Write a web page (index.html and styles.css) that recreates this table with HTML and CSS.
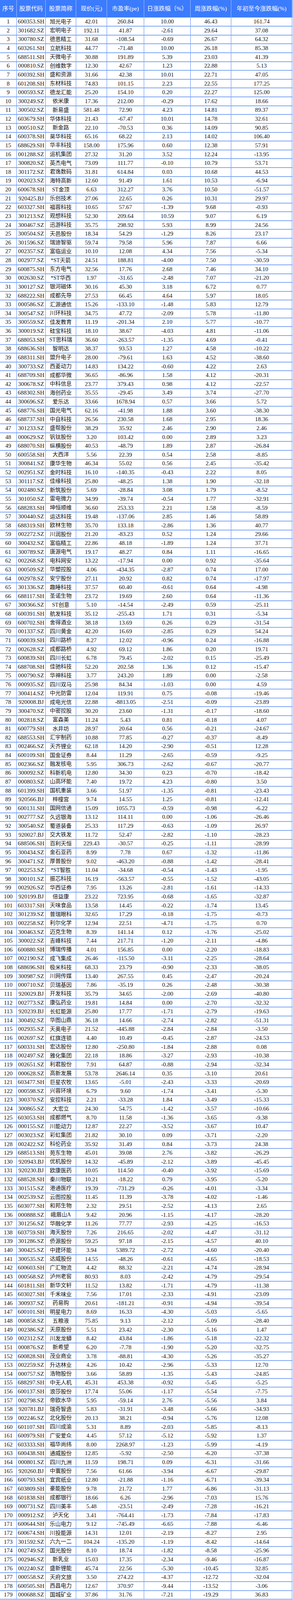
FILE: index.html
```html
<!DOCTYPE html>
<html lang="zh-CN">
<head>
<meta charset="utf-8">
<title>股票涨跌幅</title>
<link rel="stylesheet" href="styles.css">
</head>
<body>
<div class="tbl">
<div class="hd"><span>序号</span><span>股票代码</span><span>股票简称</span><span>现价(元)</span><span>市盈率(pe)</span><span>日涨跌幅（%）</span><span>周涨跌幅(%)</span><span>年初至今涨跌幅(%)</span></div>
<div class="r"><span>1</span><span>600353.SH</span><span>旭光电子</span><span>42.01</span><span>260.84</span><span>10.00</span><span>46.43</span><span>161.74</span></div>
<div class="r"><span>2</span><span>301682.SZ</span><span>宏明电子</span><span>192.11</span><span>41.87</span><span>-2.61</span><span>29.64</span><span>37.08</span></div>
<div class="r"><span>3</span><span>300780.SZ</span><span>德恩精工</span><span>31.68</span><span>-108.54</span><span>-0.69</span><span>26.67</span><span>64.32</span></div>
<div class="r"><span>4</span><span>603261.SH</span><span>立航科技</span><span>44.77</span><span>-71.48</span><span>10.00</span><span>26.18</span><span>85.38</span></div>
<div class="r"><span>5</span><span>688511.SH</span><span>天微电子</span><span>30.88</span><span>191.89</span><span>5.39</span><span>23.03</span><span>41.39</span></div>
<div class="r"><span>6</span><span>000810.SZ</span><span>创维数字</span><span>12.30</span><span>42.67</span><span>1.23</span><span>22.88</span><span>5.13</span></div>
<div class="r"><span>7</span><span>600392.SH</span><span>盛和资源</span><span>31.66</span><span>42.38</span><span>10.01</span><span>22.71</span><span>47.05</span></div>
<div class="r"><span>8</span><span>601208.SH</span><span>东材科技</span><span>74.83</span><span>101.15</span><span>2.23</span><span>22.55</span><span>177.25</span></div>
<div class="r"><span>9</span><span>000593.SZ</span><span>德龙汇能</span><span>25.20</span><span>154.10</span><span>0.20</span><span>22.27</span><span>125.00</span></div>
<div class="r"><span>10</span><span>300249.SZ</span><span>依米康</span><span>17.36</span><span>212.00</span><span>-0.29</span><span>17.62</span><span>18.66</span></div>
<div class="r"><span>11</span><span>300502.SZ</span><span>新易盛</span><span>581.48</span><span>72.90</span><span>4.23</span><span>14.81</span><span>89.37</span></div>
<div class="r"><span>12</span><span>603679.SH</span><span>华体科技</span><span>21.43</span><span>-67.47</span><span>10.01</span><span>14.78</span><span>32.61</span></div>
<div class="r"><span>13</span><span>000510.SZ</span><span>新金路</span><span>22.10</span><span>-70.53</span><span>0.36</span><span>14.09</span><span>90.85</span></div>
<div class="r"><span>14</span><span>600378.SH</span><span>昊华科技</span><span>65.16</span><span>68.22</span><span>2.13</span><span>14.02</span><span>106.40</span></div>
<div class="r"><span>15</span><span>688629.SH</span><span>华丰科技</span><span>158.00</span><span>175.96</span><span>0.60</span><span>12.38</span><span>57.91</span></div>
<div class="r"><span>16</span><span>001288.SZ</span><span>运机集团</span><span>27.32</span><span>31.20</span><span>3.52</span><span>12.24</span><span>-13.95</span></div>
<div class="r"><span>17</span><span>300820.SZ</span><span>英杰电气</span><span>73.09</span><span>111.77</span><span>-0.10</span><span>10.79</span><span>53.71</span></div>
<div class="r"><span>18</span><span>301172.SZ</span><span>君逸数码</span><span>31.81</span><span>614.84</span><span>0.03</span><span>10.68</span><span>44.53</span></div>
<div class="r"><span>19</span><span>002023.SZ</span><span>海特高新</span><span>12.60</span><span>91.49</span><span>1.61</span><span>10.53</span><span>-6.94</span></div>
<div class="r"><span>20</span><span>600678.SH</span><span>ST金顶</span><span>6.63</span><span>312.27</span><span>3.76</span><span>10.50</span><span>-51.57</span></div>
<div class="r"><span>21</span><span>920425.BJ</span><span>乐创技术</span><span>27.06</span><span>22.65</span><span>0.26</span><span>10.31</span><span>29.97</span></div>
<div class="r"><span>22</span><span>603327.SH</span><span>福蓉科技</span><span>10.65</span><span>57.67</span><span>-1.39</span><span>9.68</span><span>-0.93</span></div>
<div class="r"><span>23</span><span>301213.SZ</span><span>观想科技</span><span>52.30</span><span>209.64</span><span>10.59</span><span>9.07</span><span>6.19</span></div>
<div class="r"><span>24</span><span>300467.SZ</span><span>迅游科技</span><span>35.75</span><span>298.92</span><span>5.93</span><span>8.99</span><span>24.56</span></div>
<div class="r"><span>25</span><span>300504.SZ</span><span>天邑股份</span><span>18.34</span><span>54.29</span><span>-1.29</span><span>8.26</span><span>23.17</span></div>
<div class="r"><span>26</span><span>301596.SZ</span><span>瑞迪智驱</span><span>59.74</span><span>79.58</span><span>5.96</span><span>7.87</span><span>6.66</span></div>
<div class="r"><span>27</span><span>002357.SZ</span><span>富临运业</span><span>10.10</span><span>12.08</span><span>4.34</span><span>7.56</span><span>-5.34</span></div>
<div class="r"><span>28</span><span>002977.SZ</span><span>*ST天箭</span><span>24.51</span><span>188.81</span><span>-4.00</span><span>7.50</span><span>-30.59</span></div>
<div class="r"><span>29</span><span>600875.SH</span><span>东方电气</span><span>32.56</span><span>17.76</span><span>2.68</span><span>7.46</span><span>34.10</span></div>
<div class="r"><span>30</span><span>002630.SZ</span><span>*ST华西</span><span>1.97</span><span>-31.65</span><span>-2.48</span><span>7.07</span><span>-21.20</span></div>
<div class="r"><span>31</span><span>300127.SZ</span><span>银河磁体</span><span>30.16</span><span>45.30</span><span>3.18</span><span>6.72</span><span>0.77</span></div>
<div class="r"><span>32</span><span>688222.SH</span><span>成都先导</span><span>27.53</span><span>66.45</span><span>4.64</span><span>5.97</span><span>18.05</span></div>
<div class="r"><span>33</span><span>000586.SZ</span><span>汇源通信</span><span>15.26</span><span>-133.10</span><span>-1.48</span><span>5.83</span><span>12.79</span></div>
<div class="r"><span>34</span><span>300547.SZ</span><span>川环科技</span><span>34.75</span><span>47.72</span><span>-2.09</span><span>5.78</span><span>-11.80</span></div>
<div class="r"><span>35</span><span>300559.SZ</span><span>佳发教育</span><span>11.19</span><span>-201.34</span><span>2.10</span><span>5.77</span><span>-10.77</span></div>
<div class="r"><span>36</span><span>300019.SZ</span><span>硅宝科技</span><span>18.10</span><span>38.67</span><span>-4.03</span><span>4.81</span><span>-11.06</span></div>
<div class="r"><span>37</span><span>688053.SH</span><span>ST思科瑞</span><span>36.60</span><span>-263.57</span><span>-1.35</span><span>4.69</span><span>-0.41</span></div>
<div class="r"><span>38</span><span>688636.SH</span><span>智明达</span><span>38.37</span><span>93.53</span><span>1.27</span><span>4.58</span><span>-10.22</span></div>
<div class="r"><span>39</span><span>688311.SH</span><span>盟升电子</span><span>28.00</span><span>-79.61</span><span>1.63</span><span>4.52</span><span>-38.60</span></div>
<div class="r"><span>40</span><span>300733.SZ</span><span>西菱动力</span><span>14.83</span><span>134.22</span><span>-0.60</span><span>4.22</span><span>2.63</span></div>
<div class="r"><span>41</span><span>688709.SH</span><span>成都华微</span><span>36.65</span><span>-86.96</span><span>1.58</span><span>4.12</span><span>-20.31</span></div>
<div class="r"><span>42</span><span>300678.SZ</span><span>中科信息</span><span>23.77</span><span>379.43</span><span>0.98</span><span>4.12</span><span>-22.57</span></div>
<div class="r"><span>43</span><span>688302.SH</span><span>海创药业</span><span>35.55</span><span>-29.45</span><span>3.49</span><span>3.74</span><span>-27.70</span></div>
<div class="r"><span>44</span><span>300696.SZ</span><span>爱乐达</span><span>33.66</span><span>1678.94</span><span>0.57</span><span>3.66</span><span>5.72</span></div>
<div class="r"><span>45</span><span>688776.SH</span><span>国光电气</span><span>62.16</span><span>-41.98</span><span>1.88</span><span>3.60</span><span>-38.30</span></div>
<div class="r"><span>46</span><span>688737.SH</span><span>中自科技</span><span>26.56</span><span>230.58</span><span>1.68</span><span>2.95</span><span>18.36</span></div>
<div class="r"><span>47</span><span>301233.SZ</span><span>盛帮股份</span><span>38.29</span><span>35.92</span><span>2.46</span><span>2.90</span><span>2.46</span></div>
<div class="r"><span>48</span><span>000629.SZ</span><span>钒钛股份</span><span>3.20</span><span>103.42</span><span>0.00</span><span>2.89</span><span>3.23</span></div>
<div class="r"><span>49</span><span>688070.SH</span><span>纵横股份</span><span>40.53</span><span>-48.79</span><span>1.89</span><span>2.87</span><span>-26.84</span></div>
<div class="r"><span>50</span><span>600558.SH</span><span>大西洋</span><span>5.56</span><span>22.39</span><span>0.54</span><span>2.58</span><span>-8.85</span></div>
<div class="r"><span>51</span><span>300841.SZ</span><span>康华生物</span><span>46.34</span><span>55.02</span><span>0.56</span><span>2.45</span><span>-35.42</span></div>
<div class="r"><span>52</span><span>002951.SZ</span><span>金时科技</span><span>16.10</span><span>-140.35</span><span>-0.43</span><span>2.22</span><span>8.05</span></div>
<div class="r"><span>53</span><span>301117.SZ</span><span>佳缘科技</span><span>25.80</span><span>-48.25</span><span>1.38</span><span>1.90</span><span>-32.18</span></div>
<div class="r"><span>54</span><span>002480.SZ</span><span>新筑股份</span><span>5.69</span><span>-28.84</span><span>3.08</span><span>1.79</span><span>-8.52</span></div>
<div class="r"><span>55</span><span>301050.SZ</span><span>雷电微力</span><span>34.99</span><span>-39.74</span><span>-0.54</span><span>1.77</span><span>-32.91</span></div>
<div class="r"><span>56</span><span>688283.SH</span><span>坤恒顺维</span><span>36.60</span><span>253.33</span><span>2.21</span><span>1.58</span><span>-8.59</span></div>
<div class="r"><span>57</span><span>300440.SZ</span><span>运达科技</span><span>19.48</span><span>-137.06</span><span>2.85</span><span>1.46</span><span>58.89</span></div>
<div class="r"><span>58</span><span>688319.SH</span><span>欧林生物</span><span>35.70</span><span>133.18</span><span>-2.86</span><span>1.36</span><span>40.77</span></div>
<div class="r"><span>59</span><span>002272.SZ</span><span>川润股份</span><span>21.20</span><span>-83.23</span><span>0.52</span><span>1.24</span><span>29.66</span></div>
<div class="r"><span>60</span><span>300432.SZ</span><span>富临精工</span><span>22.86</span><span>48.18</span><span>-1.89</span><span>1.24</span><span>37.71</span></div>
<div class="r"><span>61</span><span>300789.SZ</span><span>唐源电气</span><span>19.17</span><span>48.27</span><span>0.84</span><span>1.11</span><span>-16.65</span></div>
<div class="r"><span>62</span><span>002268.SZ</span><span>电科网安</span><span>13.22</span><span>-17.94</span><span>0.00</span><span>0.92</span><span>-35.64</span></div>
<div class="r"><span>63</span><span>000509.SZ</span><span>华塑控股</span><span>4.06</span><span>-434.35</span><span>-2.87</span><span>0.74</span><span>17.00</span></div>
<div class="r"><span>64</span><span>002978.SZ</span><span>安宁股份</span><span>27.11</span><span>20.92</span><span>0.82</span><span>0.74</span><span>-17.97</span></div>
<div class="r"><span>65</span><span>301336.SZ</span><span>趣睡科技</span><span>37.57</span><span>60.40</span><span>-0.61</span><span>0.64</span><span>-4.98</span></div>
<div class="r"><span>66</span><span>688117.SH</span><span>圣诺生物</span><span>23.72</span><span>19.69</span><span>2.60</span><span>0.64</span><span>-11.36</span></div>
<div class="r"><span>67</span><span>300366.SZ</span><span>ST创意</span><span>5.10</span><span>-14.54</span><span>-2.49</span><span>0.59</span><span>-25.11</span></div>
<div class="r"><span>68</span><span>600391.SH</span><span>航发科技</span><span>35.12</span><span>-255.43</span><span>1.71</span><span>0.31</span><span>-5.34</span></div>
<div class="r"><span>69</span><span>600702.SH</span><span>舍得酒业</span><span>38.18</span><span>13.69</span><span>0.26</span><span>0.29</span><span>-31.54</span></div>
<div class="r"><span>70</span><span>001337.SZ</span><span>四川黄金</span><span>42.20</span><span>16.69</span><span>-2.85</span><span>0.29</span><span>54.24</span></div>
<div class="r"><span>71</span><span>600039.SH</span><span>四川路桥</span><span>8.27</span><span>12.02</span><span>-0.96</span><span>0.24</span><span>-16.88</span></div>
<div class="r"><span>72</span><span>002628.SZ</span><span>成都路桥</span><span>4.92</span><span>69.12</span><span>1.86</span><span>0.20</span><span>19.71</span></div>
<div class="r"><span>73</span><span>600839.SH</span><span>四川长虹</span><span>6.78</span><span>79.45</span><span>-2.02</span><span>0.15</span><span>-25.49</span></div>
<div class="r"><span>74</span><span>688708.SH</span><span>佳驰科技</span><span>52.20</span><span>202.58</span><span>1.36</span><span>0.12</span><span>-15.47</span></div>
<div class="r"><span>75</span><span>000790.SZ</span><span>华神科技</span><span>3.77</span><span>243.20</span><span>1.89</span><span>0.00</span><span>-2.58</span></div>
<div class="r"><span>76</span><span>000935.SZ</span><span>四川双马</span><span>25.98</span><span>84.34</span><span>-1.03</span><span>0.00</span><span>4.59</span></div>
<div class="r"><span>77</span><span>300414.SZ</span><span>中光防雷</span><span>12.04</span><span>119.91</span><span>0.75</span><span>-0.08</span><span>-19.46</span></div>
<div class="r"><span>78</span><span>920008.BJ</span><span>成电光信</span><span>22.88</span><span>-8813.05</span><span>-2.51</span><span>-0.09</span><span>-23.89</span></div>
<div class="r"><span>79</span><span>300470.SZ</span><span>中密控股</span><span>30.20</span><span>23.60</span><span>-1.31</span><span>-0.17</span><span>-18.60</span></div>
<div class="r"><span>80</span><span>002818.SZ</span><span>富森美</span><span>11.24</span><span>5.43</span><span>0.81</span><span>-0.18</span><span>4.07</span></div>
<div class="r"><span>81</span><span>600779.SH</span><span>水井坊</span><span>28.97</span><span>20.64</span><span>0.56</span><span>-0.21</span><span>-24.67</span></div>
<div class="r"><span>82</span><span>688553.SH</span><span>汇宇制药</span><span>10.88</span><span>77.85</span><span>-0.27</span><span>-0.37</span><span>-8.49</span></div>
<div class="r"><span>83</span><span>002466.SZ</span><span>天齐锂业</span><span>62.18</span><span>14.20</span><span>-2.90</span><span>-0.51</span><span>12.28</span></div>
<div class="r"><span>84</span><span>600109.SH</span><span>国金证券</span><span>8.44</span><span>11.29</span><span>-2.65</span><span>-0.59</span><span>-9.25</span></div>
<div class="r"><span>85</span><span>002366.SZ</span><span>融发核电</span><span>5.95</span><span>306.73</span><span>-2.62</span><span>-0.67</span><span>-20.77</span></div>
<div class="r"><span>86</span><span>300092.SZ</span><span>科新机电</span><span>12.80</span><span>34.30</span><span>0.23</span><span>-0.70</span><span>-18.42</span></div>
<div class="r"><span>87</span><span>000803.SZ</span><span>山高环能</span><span>7.40</span><span>19.72</span><span>4.23</span><span>-0.80</span><span>3.50</span></div>
<div class="r"><span>88</span><span>601399.SH</span><span>国机重装</span><span>3.66</span><span>51.97</span><span>-1.35</span><span>-0.81</span><span>-23.43</span></div>
<div class="r"><span>89</span><span>920566.BJ</span><span>梓橦宫</span><span>9.74</span><span>14.55</span><span>1.25</span><span>-0.81</span><span>-12.41</span></div>
<div class="r"><span>90</span><span>600131.SH</span><span>国网信通</span><span>15.09</span><span>1055.73</span><span>-0.59</span><span>-0.98</span><span>-6.22</span></div>
<div class="r"><span>91</span><span>002777.SZ</span><span>久远银海</span><span>13.12</span><span>114.11</span><span>0.00</span><span>-1.06</span><span>-26.46</span></div>
<div class="r"><span>92</span><span>300540.SZ</span><span>蜀道装备</span><span>25.33</span><span>117.29</span><span>-0.63</span><span>-1.09</span><span>26.97</span></div>
<div class="r"><span>93</span><span>920027.BJ</span><span>交大铁发</span><span>11.72</span><span>52.47</span><span>-2.82</span><span>-1.10</span><span>-28.23</span></div>
<div class="r"><span>94</span><span>688506.SH</span><span>百利天恒</span><span>229.43</span><span>-30.57</span><span>-0.25</span><span>-1.11</span><span>-28.99</span></div>
<div class="r"><span>95</span><span>300434.SZ</span><span>金石亚药</span><span>8.99</span><span>7.78</span><span>0.67</span><span>-1.32</span><span>-11.86</span></div>
<div class="r"><span>96</span><span>300471.SZ</span><span>厚普股份</span><span>9.02</span><span>-463.20</span><span>-0.88</span><span>-1.42</span><span>-28.41</span></div>
<div class="r"><span>97</span><span>002253.SZ</span><span>*ST智胜</span><span>11.04</span><span>-34.68</span><span>-0.54</span><span>-1.43</span><span>-1.95</span></div>
<div class="r"><span>98</span><span>300101.SZ</span><span>振芯科技</span><span>16.19</span><span>-563.57</span><span>-0.55</span><span>-1.52</span><span>-43.05</span></div>
<div class="r"><span>99</span><span>002926.SZ</span><span>华西证券</span><span>7.95</span><span>13.26</span><span>-2.81</span><span>-1.61</span><span>-14.33</span></div>
<div class="r"><span>100</span><span>920199.BJ</span><span>倍益康</span><span>23.22</span><span>723.95</span><span>-0.68</span><span>-1.65</span><span>-32.87</span></div>
<div class="r"><span>101</span><span>603317.SH</span><span>天味食品</span><span>13.58</span><span>14.45</span><span>-0.22</span><span>-1.74</span><span>13.45</span></div>
<div class="r"><span>102</span><span>301239.SZ</span><span>普瑞眼科</span><span>32.65</span><span>17.29</span><span>-0.18</span><span>-1.75</span><span>-0.73</span></div>
<div class="r"><span>103</span><span>002258.SZ</span><span>利尔化学</span><span>12.94</span><span>22.51</span><span>-4.71</span><span>-1.75</span><span>0.70</span></div>
<div class="r"><span>104</span><span>300463.SZ</span><span>迈克生物</span><span>8.39</span><span>141.14</span><span>0.12</span><span>-1.76</span><span>-25.02</span></div>
<div class="r"><span>105</span><span>300022.SZ</span><span>吉峰科技</span><span>7.44</span><span>217.71</span><span>-1.20</span><span>-2.11</span><span>-4.86</span></div>
<div class="r"><span>106</span><span>600880.SH</span><span>博瑞传播</span><span>4.01</span><span>156.85</span><span>0.00</span><span>-2.20</span><span>-18.83</span></div>
<div class="r"><span>107</span><span>002190.SZ</span><span>成飞集成</span><span>26.46</span><span>-115.50</span><span>-3.11</span><span>-2.25</span><span>-28.64</span></div>
<div class="r"><span>108</span><span>688696.SH</span><span>极米科技</span><span>68.33</span><span>23.79</span><span>-0.90</span><span>-2.33</span><span>-38.05</span></div>
<div class="r"><span>109</span><span>300987.SZ</span><span>川网传媒</span><span>13.40</span><span>267.55</span><span>0.45</span><span>-2.47</span><span>-20.24</span></div>
<div class="r"><span>110</span><span>000710.SZ</span><span>贝瑞基因</span><span>7.86</span><span>-35.19</span><span>0.26</span><span>-2.48</span><span>-30.38</span></div>
<div class="r"><span>111</span><span>920029.BJ</span><span>开发科技</span><span>35.79</span><span>34.65</span><span>-2.00</span><span>-2.69</span><span>-40.80</span></div>
<div class="r"><span>112</span><span>002773.SZ</span><span>康弘药业</span><span>19.81</span><span>14.84</span><span>0.00</span><span>-2.70</span><span>-32.32</span></div>
<div class="r"><span>113</span><span>920239.BJ</span><span>长虹能源</span><span>25.80</span><span>17.77</span><span>-1.71</span><span>-2.79</span><span>-19.63</span></div>
<div class="r"><span>114</span><span>300492.SZ</span><span>华图山鼎</span><span>36.18</span><span>14.66</span><span>-2.74</span><span>-2.82</span><span>-51.31</span></div>
<div class="r"><span>115</span><span>002935.SZ</span><span>天奥电子</span><span>21.52</span><span>-445.88</span><span>-2.84</span><span>-2.84</span><span>-3.50</span></div>
<div class="r"><span>116</span><span>002697.SZ</span><span>红旗连锁</span><span>4.40</span><span>10.49</span><span>-0.45</span><span>-2.87</span><span>-24.53</span></div>
<div class="r"><span>117</span><span>600331.SH</span><span>宏达股份</span><span>12.80</span><span>-250.80</span><span>-1.84</span><span>-2.88</span><span>0.08</span></div>
<div class="r"><span>118</span><span>002497.SZ</span><span>雅化集团</span><span>22.18</span><span>18.86</span><span>-3.27</span><span>-2.93</span><span>-10.38</span></div>
<div class="r"><span>119</span><span>002651.SZ</span><span>利君股份</span><span>7.91</span><span>64.87</span><span>-0.88</span><span>-2.94</span><span>-32.34</span></div>
<div class="r"><span>120</span><span>000628.SZ</span><span>高新发展</span><span>53.78</span><span>2646.14</span><span>0.35</span><span>-3.10</span><span>20.61</span></div>
<div class="r"><span>121</span><span>603477.SH</span><span>巨星农牧</span><span>13.65</span><span>-5.01</span><span>-2.43</span><span>-3.33</span><span>-20.69</span></div>
<div class="r"><span>122</span><span>000598.SZ</span><span>兴蓉环境</span><span>6.79</span><span>9.60</span><span>-1.74</span><span>-3.41</span><span>-5.30</span></div>
<div class="r"><span>123</span><span>300370.SZ</span><span>安控科技</span><span>2.21</span><span>-33.28</span><span>1.84</span><span>-3.49</span><span>-15.33</span></div>
<div class="r"><span>124</span><span>300865.SZ</span><span>大宏立</span><span>24.30</span><span>54.75</span><span>-1.42</span><span>-3.57</span><span>-10.66</span></div>
<div class="r"><span>125</span><span>603053.SH</span><span>成都燃气</span><span>8.70</span><span>11.58</span><span>-1.36</span><span>-3.65</span><span>-9.38</span></div>
<div class="r"><span>126</span><span>000155.SZ</span><span>川能动力</span><span>12.87</span><span>22.27</span><span>-3.52</span><span>-3.67</span><span>10.47</span></div>
<div class="r"><span>127</span><span>003023.SZ</span><span>彩虹集团</span><span>21.82</span><span>30.10</span><span>0.09</span><span>-3.71</span><span>-2.20</span></div>
<div class="r"><span>128</span><span>002422.SZ</span><span>科伦药业</span><span>35.92</span><span>31.49</span><span>0.84</span><span>-3.73</span><span>24.38</span></div>
<div class="r"><span>129</span><span>688513.SH</span><span>苑东生物</span><span>45.01</span><span>39.08</span><span>2.76</span><span>-3.82</span><span>-26.29</span></div>
<div class="r"><span>130</span><span>920943.BJ</span><span>优机股份</span><span>14.32</span><span>-45.89</span><span>-2.12</span><span>-3.89</span><span>-45.45</span></div>
<div class="r"><span>131</span><span>920230.BJ</span><span>欧康医药</span><span>10.05</span><span>114.50</span><span>-0.40</span><span>-3.92</span><span>-15.69</span></div>
<div class="r"><span>132</span><span>688528.SH</span><span>秦川物联</span><span>10.21</span><span>-18.22</span><span>0.79</span><span>-3.95</span><span>-5.20</span></div>
<div class="r"><span>133</span><span>301515.SZ</span><span>港通医疗</span><span>19.39</span><span>-731.29</span><span>-0.26</span><span>-4.01</span><span>-3.34</span></div>
<div class="r"><span>134</span><span>002539.SZ</span><span>云图控股</span><span>11.45</span><span>11.39</span><span>-3.78</span><span>-4.02</span><span>-1.46</span></div>
<div class="r"><span>135</span><span>603077.SH</span><span>和邦生物</span><span>2.32</span><span>29.51</span><span>-2.52</span><span>-4.13</span><span>2.65</span></div>
<div class="r"><span>136</span><span>000888.SZ</span><span>峨眉山A</span><span>9.42</span><span>20.96</span><span>-1.15</span><span>-4.17</span><span>-28.20</span></div>
<div class="r"><span>137</span><span>301256.SZ</span><span>华融化学</span><span>11.26</span><span>77.77</span><span>-2.93</span><span>-4.25</span><span>-16.53</span></div>
<div class="r"><span>138</span><span>603759.SH</span><span>海天股份</span><span>7.26</span><span>216.65</span><span>-2.02</span><span>-4.47</span><span>-31.12</span></div>
<div class="r"><span>139</span><span>301286.SZ</span><span>侨源股份</span><span>59.25</span><span>97.18</span><span>-2.15</span><span>-4.57</span><span>40.10</span></div>
<div class="r"><span>140</span><span>300425.SZ</span><span>中建环能</span><span>3.94</span><span>5389.72</span><span>-2.72</span><span>-4.60</span><span>-20.40</span></div>
<div class="r"><span>141</span><span>300535.SZ</span><span>达威股份</span><span>14.55</span><span>-48.26</span><span>-0.61</span><span>-4.65</span><span>-18.53</span></div>
<div class="r"><span>142</span><span>600603.SH</span><span>广汇物流</span><span>4.42</span><span>88.32</span><span>-2.21</span><span>-4.74</span><span>-28.94</span></div>
<div class="r"><span>143</span><span>000568.SZ</span><span>泸州老窖</span><span>80.93</span><span>8.03</span><span>-2.42</span><span>-4.79</span><span>-29.54</span></div>
<div class="r"><span>144</span><span>601811.SH</span><span>新华文轩</span><span>11.52</span><span>13.82</span><span>-1.71</span><span>-4.79</span><span>-11.38</span></div>
<div class="r"><span>145</span><span>603027.SH</span><span>千禾味业</span><span>7.56</span><span>17.01</span><span>-2.33</span><span>-4.91</span><span>-23.09</span></div>
<div class="r"><span>146</span><span>300937.SZ</span><span>药易购</span><span>20.61</span><span>-181.21</span><span>-0.91</span><span>-4.94</span><span>-39.54</span></div>
<div class="r"><span>147</span><span>600101.SH</span><span>明星电力</span><span>8.69</span><span>16.33</span><span>-4.30</span><span>-5.03</span><span>-5.65</span></div>
<div class="r"><span>148</span><span>000858.SZ</span><span>五粮液</span><span>75.85</span><span>9.13</span><span>-2.12</span><span>-5.09</span><span>-28.40</span></div>
<div class="r"><span>149</span><span>002386.SZ</span><span>天原股份</span><span>5.51</span><span>23.42</span><span>-2.30</span><span>-5.16</span><span>1.47</span></div>
<div class="r"><span>150</span><span>002312.SZ</span><span>川发龙蟒</span><span>8.42</span><span>43.84</span><span>-1.86</span><span>-5.18</span><span>-22.32</span></div>
<div class="r"><span>151</span><span>000876.SZ</span><span>新希望</span><span>6.20</span><span>-7.78</span><span>-1.90</span><span>-5.20</span><span>-32.75</span></div>
<div class="r"><span>152</span><span>600828.SH</span><span>茂业商业</span><span>3.78</span><span>-88.81</span><span>-4.30</span><span>-5.26</span><span>-35.27</span></div>
<div class="r"><span>153</span><span>002259.SZ</span><span>升达林业</span><span>4.26</span><span>10.42</span><span>-2.96</span><span>-5.33</span><span>12.70</span></div>
<div class="r"><span>154</span><span>000757.SZ</span><span>浩物股份</span><span>3.66</span><span>58.89</span><span>-1.35</span><span>-5.43</span><span>-24.85</span></div>
<div class="r"><span>155</span><span>688297.SH</span><span>中无人机</span><span>45.31</span><span>453.38</span><span>-0.92</span><span>-5.45</span><span>-5.25</span></div>
<div class="r"><span>156</span><span>600137.SH</span><span>浪莎股份</span><span>17.74</span><span>55.06</span><span>-1.17</span><span>-5.54</span><span>-7.75</span></div>
<div class="r"><span>157</span><span>002798.SZ</span><span>帝欧水华</span><span>5.95</span><span>-59.14</span><span>2.76</span><span>-5.56</span><span>3.84</span></div>
<div class="r"><span>158</span><span>920781.BJ</span><span>瑞奇智造</span><span>5.83</span><span>-31.91</span><span>-3.48</span><span>-5.66</span><span>-34.93</span></div>
<div class="r"><span>159</span><span>002246.SZ</span><span>北化股份</span><span>20.13</span><span>38.21</span><span>-0.94</span><span>-5.76</span><span>12.08</span></div>
<div class="r"><span>160</span><span>601107.SH</span><span>四川成渝</span><span>5.31</span><span>8.89</span><span>-2.03</span><span>-5.85</span><span>-8.13</span></div>
<div class="r"><span>161</span><span>600979.SH</span><span>广安爱众</span><span>4.45</span><span>57.12</span><span>-5.12</span><span>-5.92</span><span>1.37</span></div>
<div class="r"><span>162</span><span>603333.SH</span><span>福华尚纬</span><span>8.00</span><span>2268.97</span><span>-1.23</span><span>-5.99</span><span>-4.19</span></div>
<div class="r"><span>163</span><span>600438.SH</span><span>通威股份</span><span>12.85</span><span>-5.92</span><span>-2.50</span><span>-6.20</span><span>-37.38</span></div>
<div class="r"><span>164</span><span>000801.SZ</span><span>四川九洲</span><span>11.59</span><span>198.71</span><span>0.09</span><span>-6.31</span><span>-31.66</span></div>
<div class="r"><span>165</span><span>920260.BJ</span><span>中寰股份</span><span>7.56</span><span>61.66</span><span>-3.94</span><span>-6.67</span><span>-29.87</span></div>
<div class="r"><span>166</span><span>600793.SH</span><span>宜宾纸业</span><span>12.80</span><span>-21.88</span><span>-1.16</span><span>-6.71</span><span>-39.34</span></div>
<div class="r"><span>167</span><span>603809.SH</span><span>豪能股份</span><span>9.78</span><span>21.72</span><span>1.77</span><span>-6.86</span><span>-31.13</span></div>
<div class="r"><span>168</span><span>601838.SH</span><span>成都银行</span><span>18.66</span><span>6.26</span><span>-2.96</span><span>-7.03</span><span>15.76</span></div>
<div class="r"><span>169</span><span>000731.SZ</span><span>四川美丰</span><span>5.48</span><span>-23.51</span><span>-2.49</span><span>-7.28</span><span>-16.21</span></div>
<div class="r"><span>170</span><span>000912.SZ</span><span>泸天化</span><span>3.41</span><span>-764.41</span><span>-1.73</span><span>-7.84</span><span>-17.83</span></div>
<div class="r"><span>171</span><span>600644.SH</span><span>乐山电力</span><span>9.12</span><span>-745.49</span><span>-6.65</span><span>-7.88</span><span>-6.46</span></div>
<div class="r"><span>172</span><span>600674.SH</span><span>川投能源</span><span>14.31</span><span>12.01</span><span>-2.19</span><span>-8.27</span><span>2.95</span></div>
<div class="r"><span>173</span><span>301592.SZ</span><span>六九一二</span><span>104.24</span><span>-135.20</span><span>-1.19</span><span>-8.42</span><span>-14.64</span></div>
<div class="r"><span>174</span><span>002749.SZ</span><span>国光股份</span><span>8.10</span><span>18.74</span><span>-1.82</span><span>-8.58</span><span>-25.96</span></div>
<div class="r"><span>175</span><span>002946.SZ</span><span>新乳业</span><span>15.03</span><span>17.35</span><span>-2.34</span><span>-9.46</span><span>-16.87</span></div>
<div class="r"><span>176</span><span>002240.SZ</span><span>盛新锂能</span><span>45.74</span><span>22.56</span><span>-5.30</span><span>-10.45</span><span>32.85</span></div>
<div class="r"><span>177</span><span>000558.SZ</span><span>天府文旅</span><span>3.50</span><span>274.22</span><span>-4.37</span><span>-12.72</span><span>-32.04</span></div>
<div class="r"><span>178</span><span>600505.SH</span><span>西昌电力</span><span>12.67</span><span>370.97</span><span>-9.44</span><span>-13.52</span><span>-3.06</span></div>
<div class="r"><span>179</span><span>000688.SZ</span><span>国城矿业</span><span>37.86</span><span>31.76</span><span>-7.21</span><span>-19.29</span><span>36.83</span></div>
</div>
</body>
</html>
```
FILE: styles.css
```css
html, body {
  margin: 0;
  padding: 0;
  background: #ffffff;
}

.tbl {
  width: 749px;
  font-family: "Liberation Serif", "Noto Sans CJK SC", serif;
  font-size: 15px;
  color: #111111;
}

.hd,
.r {
  display: grid;
  grid-template-columns: 43px 74px 78px 79px 95px 119px 104px 156px;
  box-sizing: border-box;
}

.hd {
  height: 45.4px;
  background: #3b7bfd;
  color: #ffffff;
  font-size: 15px;
  border-bottom: 1px solid #6f9cf6;
}

.hd > span {
  display: flex;
  align-items: center;
  justify-content: center;
  white-space: nowrap;
  border-right: 1px solid #a9c4fb;
  box-sizing: border-box;
  line-height: 1;
}

.r {
  height: 22.625px;
  border-bottom: 2px solid #7ea6f5;
}

.r > span {
  display: flex;
  align-items: center;
  justify-content: center;
  white-space: nowrap;
  border-right: 1px solid #4f86f3;
  box-sizing: border-box;
  line-height: 1;
}

.r > span:nth-child(3) {
  font-size: 14px;
}
```
